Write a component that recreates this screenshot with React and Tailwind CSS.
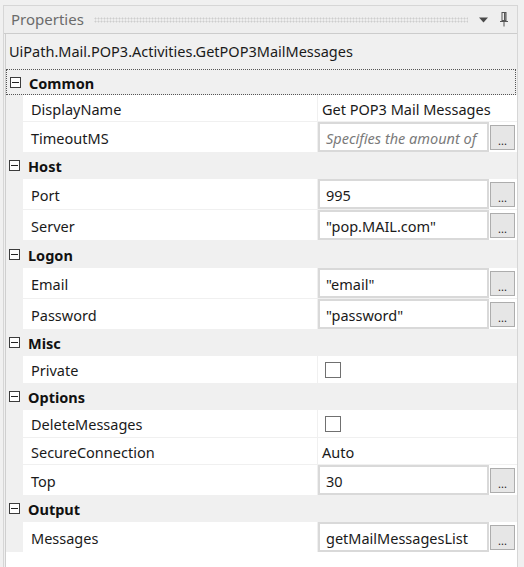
const GROUPS = [
  {
    name: 'Common',
    h: 'h-[26px]',
    focused: true,
    rows: [
      { label: 'DisplayName', kind: 'text', value: 'Get POP3 Mail Messages', h: 'h-[26px]' },
      { label: 'TimeoutMS', kind: 'box', placeholder: 'Specifies the amount of', h: 'h-[30px]' },
    ],
  },
  {
    name: 'Host',
    h: 'h-[27px]',
    rows: [
      { label: 'Port', kind: 'box', value: '995', h: 'h-[30px]' },
      { label: 'Server', kind: 'box', value: '"pop.MAIL.com"', h: 'h-[30px]' },
    ],
  },
  {
    name: 'Logon',
    h: 'h-[28px]',
    rows: [
      { label: 'Email', kind: 'box', value: '"email"', h: 'h-[30px]' },
      { label: 'Password', kind: 'box', value: '"password"', h: 'h-[30px]' },
    ],
  },
  {
    name: 'Misc',
    h: 'h-[27px]',
    rows: [{ label: 'Private', kind: 'check', h: 'h-[27px]' }],
  },
  {
    name: 'Options',
    h: 'h-[27px]',
    rows: [
      { label: 'DeleteMessages', kind: 'check', h: 'h-[27px]' },
      { label: 'SecureConnection', kind: 'text', value: 'Auto', h: 'h-[26px]' },
      { label: 'Top', kind: 'box', value: '30', h: 'h-[30px]' },
    ],
  },
  {
    name: 'Output',
    h: 'h-[27px]',
    rows: [{ label: 'Messages', kind: 'box', value: 'getMailMessagesList', h: 'h-[30px]' }],
  },
]

function MinusBox() {
  return (
    <span className="flex h-[11px] w-[11px] items-center justify-center border border-[#3c3c3c] bg-white">
      <span className="h-px w-[7px] bg-[#222]" />
    </span>
  )
}

function ValueCell({ row }) {
  if (row.kind === 'box') {
    return (
      <div className="flex h-full flex-1 items-stretch bg-white">
        <div className="flex w-[171px] items-center overflow-hidden whitespace-nowrap border-2 border-[#d9d9d9] pl-[6px] pt-[3px]">
          {row.value ? (
            <span className="text-[#1a1a1a]">{row.value}</span>
          ) : (
            <span className="italic text-[#7a7a7a]">{row.placeholder}</span>
          )}
        </div>
        <div className="flex flex-1 items-center pl-px">
          <button
            type="button"
            className="flex h-[25px] w-[25px] items-end justify-center border border-[#adadad] bg-[#e6e6e6] pb-[3px] text-[11px] leading-none text-[#222]"
          >
            ...
          </button>
        </div>
      </div>
    )
  }
  if (row.kind === 'check') {
    return (
      <div className="flex h-full flex-1 items-center bg-white pl-[7px]">
        <span className="h-[16px] w-[16px] border border-[#707070] bg-white" />
      </div>
    )
  }
  return (
    <div className="flex h-full flex-1 items-center overflow-hidden whitespace-nowrap bg-white pl-[4px] pt-[3px] text-[#1a1a1a]">
      {row.value}
    </div>
  )
}

export default function App() {
  return (
    <div className="h-[567px] w-[524px] overflow-hidden bg-[#f0f0f0] pl-[3px] pt-[5px] font-['Segoe_UI','Noto_Sans',sans-serif] text-[14.5px]">
      <div className="flex h-full w-[515px] flex-col border-l border-r border-t border-[#d6d6d6]">
        {/* title bar */}
        <div className="flex h-[28px] items-center border-b border-[#cccccc] bg-[#eeeeee] pl-[7px] pr-[8px]">
          <span className="text-[15px] text-[#6b6b6b]">Properties</span>
          <div className="ml-[10px] h-[6px] flex-1 bg-[radial-gradient(circle,#cdcdcd_0.9px,transparent_1.1px)] bg-[length:3px_3px]" />
          <svg width="11" height="6" viewBox="0 0 11 6" className="ml-[10px]">
            <path d="M1 0.5 L10 0.5 L5.5 5.5 Z" fill="#4a4a4a" />
          </svg>
          <svg width="10" height="15" viewBox="0 0 10 15" className="ml-[10px]">
            <rect x="3" y="0.5" width="4" height="8" fill="none" stroke="#555" />
            <rect x="5" y="1" width="1.5" height="7" fill="#555" />
            <path d="M1 9.5 L9 9.5" stroke="#555" />
            <path d="M5 10 L5 14.5" stroke="#555" />
          </svg>
        </div>

        {/* type name */}
        <div className="ml-px flex flex-1 flex-col border-l border-[#cfcfcf]">
          <div className="flex h-[35px] items-center pl-[3px] pt-px text-[#1a1a1a]">
            UiPath.Mail.POP3.Activities.GetPOP3MailMessages
          </div>

          {/* grid */}
          <div className="flex flex-1 flex-col bg-white">
            {GROUPS.map((group) => (
              <div key={group.name} className="flex flex-col bg-[#f0f0f0]">
                <div
                  className={`flex ${group.h} items-center gap-[8px] pl-[3px] ${
                    group.focused ? 'mr-px border border-dotted border-[#555]' : ''
                  }`}
                >
                  <MinusBox />
                  <span className="pt-[3px] font-bold text-[#111]">{group.name}</span>
                </div>
                <div className="flex flex-col gap-px">
                  {group.rows.map((row) => (
                    <div key={row.label} className={`flex ${row.h} pl-[17px]`}>
                      <div className="flex h-full w-[294px] items-center bg-white pl-[8px] pt-[3px] text-[#1a1a1a]">
                        {row.label}
                      </div>
                      <div className="ml-px flex h-full flex-1">
                        <ValueCell row={row} />
                      </div>
                    </div>
                  ))}
                </div>
              </div>
            ))}
          </div>
        </div>
      </div>
    </div>
  )
}
